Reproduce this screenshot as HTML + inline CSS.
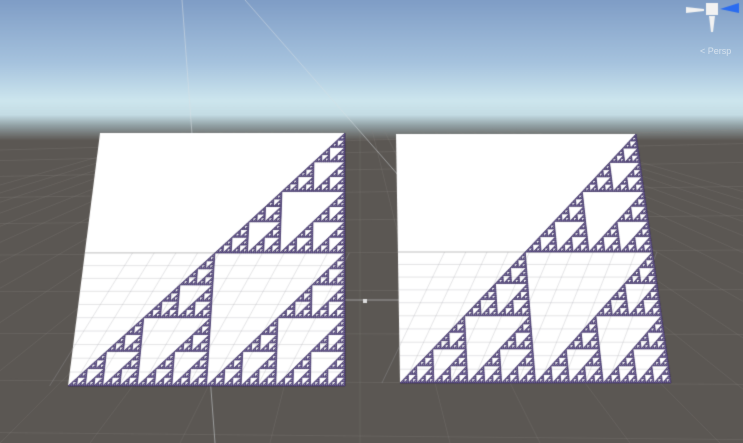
<!DOCTYPE html>
<html><head><meta charset="utf-8"><style>
html,body{margin:0;padding:0;width:743px;height:443px;overflow:hidden;background:#5a5652}
canvas{position:absolute;left:0;top:0}
.persp{position:absolute;left:700px;top:46px;font:9px "Liberation Sans",sans-serif;color:#d6e2ee}
</style></head><body>
<canvas id="c" width="743" height="443"></canvas>
<div class="persp">&lt; Persp</div>
<script>
const c=document.getElementById('c'),g=c.getContext('2d');
let sk=g.createLinearGradient(0,0,0,140);
sk.addColorStop(0,'#7f9dc6');sk.addColorStop(0.45,'#a6c3de');sk.addColorStop(0.72,'#cde6ee');
sk.addColorStop(0.82,'#c4dce4');sk.addColorStop(0.9,'#8f9ea2');sk.addColorStop(1,'#5e5a56');
g.fillStyle=sk;g.fillRect(0,0,743,140);
g.fillStyle='#5b5753';g.fillRect(0,140,743,303);
g.strokeStyle='rgba(140,135,130,0.25)';g.lineWidth=1;
for(let i=0;i<12;i++){let y=150+i*i*2.6+i*8;g.beginPath();g.moveTo(0,y);g.lineTo(743,y-20+i*3);g.stroke();}
const vx=360;
for(let i=-14;i<=14;i++){g.beginPath();g.moveTo(vx+i*12,130);g.lineTo(vx+i*90,443);g.stroke();}
g.strokeStyle='rgba(220,225,230,0.5)';
g.beginPath();g.moveTo(182,0);g.lineTo(215,443);g.stroke();
g.beginPath();g.moveTo(245,0);g.lineTo(420,200);g.stroke();
g.beginPath();g.moveTo(340,300);g.lineTo(400,300);g.stroke();
g.fillStyle='#ddd';g.fillRect(363,299,4,4);
function quad(TL,TR,BR,BL){
  const k=1.11;
  function m(u,v){
    let t=1-v; let f=t/(t+k*(1-t));
    let lx=TL[0]+(BL[0]-TL[0])*f, rx=TR[0]+(BR[0]-TR[0])*f;
    let y=TL[1]+(BL[1]-TL[1])*f;
    return [lx+(rx-lx)*u,y];
  }
  g.fillStyle='#fff';g.beginPath();g.moveTo(...TL);g.lineTo(...TR);g.lineTo(...BR);g.lineTo(...BL);g.fill();
  g.strokeStyle='rgba(170,170,175,0.3)';g.lineWidth=1;
  for(let i=1;i<10;i++){let a=m(0,i*0.05),b=m(1,i*0.05);g.beginPath();g.moveTo(...a);g.lineTo(...b);g.stroke();}
  for(let i=1;i<12;i++){let a=m(i/12-0.15,0),b=m(i/12+0.1,0.5);g.beginPath();g.moveTo(...a);g.lineTo(...b);g.stroke();}
  let a=m(0,0.5),b=m(1,0.5);g.strokeStyle='rgba(150,150,150,0.6)';g.beginPath();g.moveTo(...a);g.lineTo(...b);g.stroke();
  function tri(x0,y0,s,d){
    if(d==0){
      let p=[m(x0,y0),m(x0+s,y0),m(x0+s,y0+s)];
      g.fillStyle='#9a7fe0';g.strokeStyle='#2e2450';g.lineWidth=0.7;
      g.beginPath();g.moveTo(...p[0]);g.lineTo(...p[1]);g.lineTo(...p[2]);g.closePath();g.fill();g.stroke();return;
    }
    let h=s/2;
    tri(x0,y0,h,d-1);tri(x0+h,y0,h,d-1);tri(x0+h,y0+h,h,d-1);
  }
  tri(0,0,1,7);
}
quad([100,133],[345,133],[345,386],[68,386]);
quad([396,134],[636,134],[671,383],[400,383]);
g.fillStyle='#f2f2f2';g.fillRect(706,3,12,12);
g.beginPath();g.moveTo(686,7);g.lineTo(704,9);g.lineTo(704,11);g.lineTo(686,13);g.fill();
g.beginPath();g.moveTo(709,16);g.lineTo(715,16);g.lineTo(713,32);g.lineTo(711,32);g.fill();
g.fillStyle='#2a6cf0';g.beginPath();g.moveTo(720,9);g.lineTo(739,3);g.lineTo(739,13);g.closePath();g.fill();
</script>
</body></html>
